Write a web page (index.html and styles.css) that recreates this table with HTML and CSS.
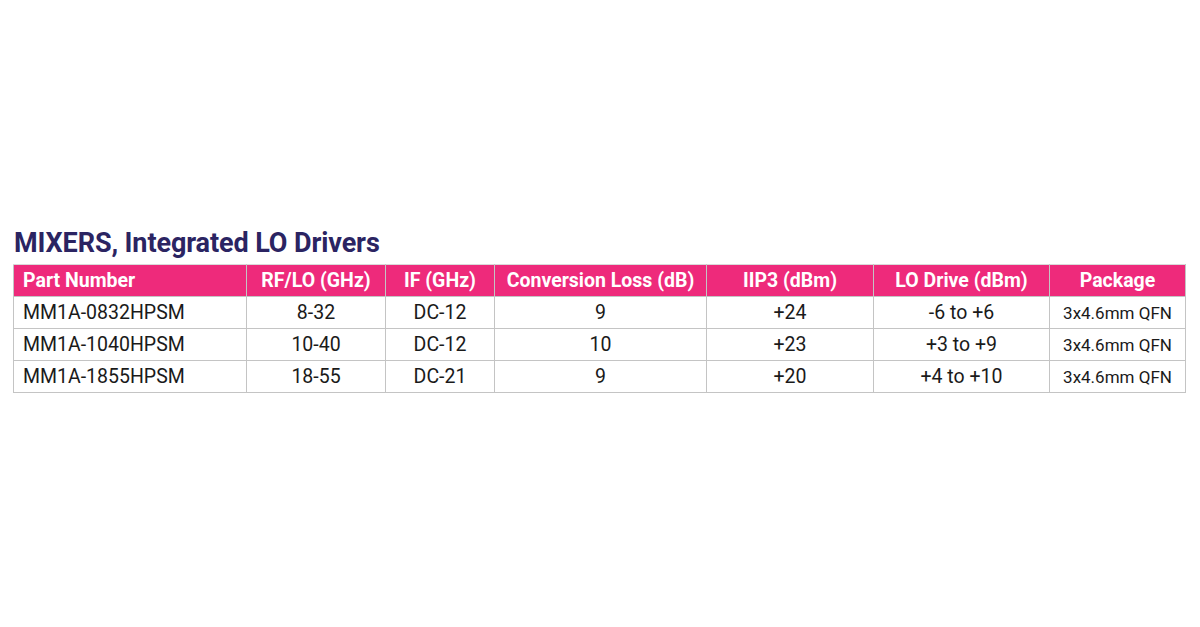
FILE: index.html
```html
<!DOCTYPE html>
<html>
<head>
<meta charset="utf-8">
<link rel="stylesheet" href="styles.css">
</head>
<body>
<div class="page">
  <h1 class="title">MIXERS, Integrated LO Drivers</h1>
  <table class="spec">
    <colgroup>
      <col class="c1"><col class="c2"><col class="c3"><col class="c4"><col class="c5"><col class="c6"><col class="c7">
    </colgroup>
    <thead>
      <tr>
        <th class="left">Part Number</th>
        <th>RF/LO (GHz)</th>
        <th>IF (GHz)</th>
        <th>Conversion Loss (dB)</th>
        <th>IIP3 (dBm)</th>
        <th>LO Drive (dBm)</th>
        <th>Package</th>
      </tr>
    </thead>
    <tbody>
      <tr>
        <td class="left">MM1A-0832HPSM</td>
        <td>8-32</td>
        <td>DC-12</td>
        <td>9</td>
        <td>+24</td>
        <td>-6 to +6</td>
        <td class="pkg">3x4.6mm QFN</td>
      </tr>
      <tr>
        <td class="left">MM1A-1040HPSM</td>
        <td>10-40</td>
        <td>DC-12</td>
        <td>10</td>
        <td>+23</td>
        <td>+3 to +9</td>
        <td class="pkg">3x4.6mm QFN</td>
      </tr>
      <tr>
        <td class="left">MM1A-1855HPSM</td>
        <td>18-55</td>
        <td>DC-21</td>
        <td>9</td>
        <td>+20</td>
        <td>+4 to +10</td>
        <td class="pkg">3x4.6mm QFN</td>
      </tr>
    </tbody>
  </table>
</div>
</body>
</html>
```

FILE: styles.css
```css
html, body {
  margin: 0;
  padding: 0;
  background: #ffffff;
}

.page {
  padding: 227px 0 0 13px;
  font-family: Roboto, "Liberation Sans", sans-serif;
}

.title {
  margin: 0 0 4px 1px;
  font-size: 27px;
  line-height: 33px;
  font-weight: 700;
  color: #2b2462;
  letter-spacing: -0.1px;
}

.spec {
  border-collapse: collapse;
  table-layout: fixed;
  width: 1172px;
}

.c1 { width: 233px; }
.c2 { width: 139px; }
.c3 { width: 109px; }
.c4 { width: 212px; }
.c5 { width: 167px; }
.c6 { width: 176px; }
.c7 { width: 136px; }

.spec th,
.spec td {
  border: 1px solid #c4c4c4;
  height: 32px;
  padding: 0 6px;
  text-align: center;
  white-space: nowrap;
  box-sizing: border-box;
}

.spec th {
  background: #ee2a7b;
  color: #ffffff;
  font-size: 19.5px;
  font-weight: 700;
  border-top-color: #d9d9d9;
}

.spec td {
  font-size: 19.5px;
  font-weight: 400;
  color: #1a1a1a;
}

.spec .left {
  text-align: left;
  padding-left: 9px;
}

.spec td.pkg {
  font-size: 17px;
}
```
